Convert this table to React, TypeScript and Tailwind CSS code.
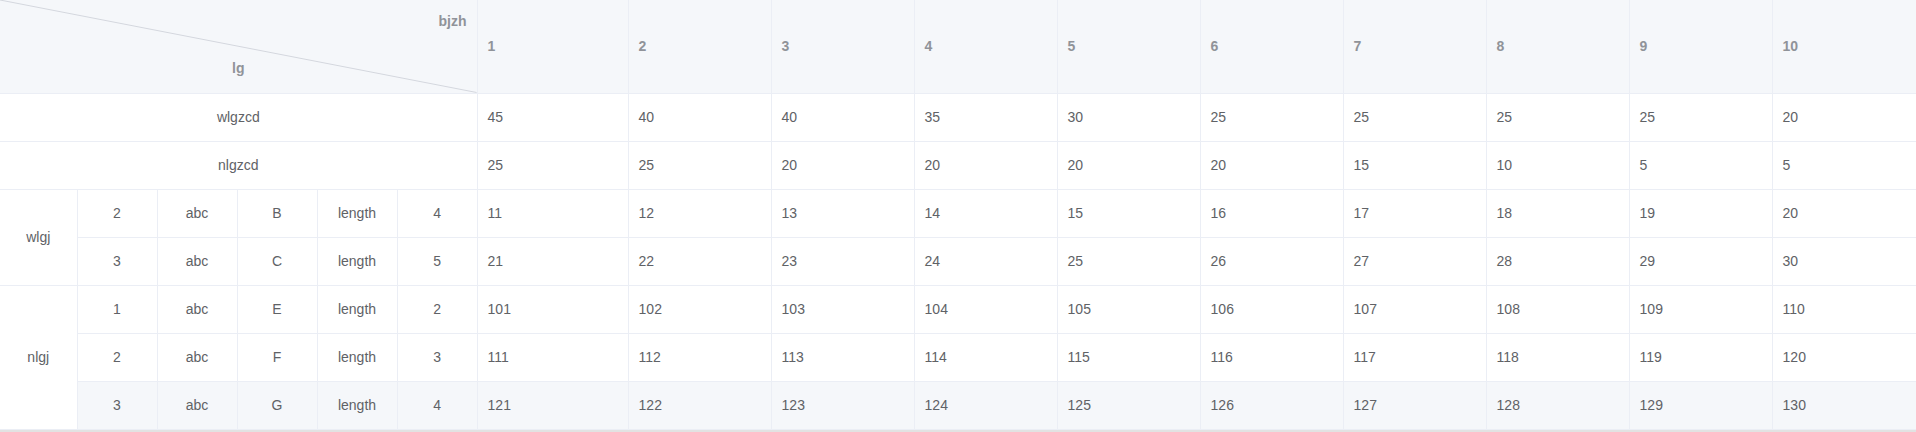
const dataRows: { label?: string; span?: number; left: (string | number)[]; vals: number[] }[] = [
  { left: ['wlgzcd'], vals: [45, 40, 40, 35, 30, 25, 25, 25, 25, 20] },
  { left: ['nlgzcd'], vals: [25, 25, 20, 20, 20, 20, 15, 10, 5, 5] },
  { label: 'wlgj', span: 2, left: [2, 'abc', 'B', 'length', 4], vals: [11, 12, 13, 14, 15, 16, 17, 18, 19, 20] },
  { left: [3, 'abc', 'C', 'length', 5], vals: [21, 22, 23, 24, 25, 26, 27, 28, 29, 30] },
  { label: 'nlgj', span: 3, left: [1, 'abc', 'E', 'length', 2], vals: [101, 102, 103, 104, 105, 106, 107, 108, 109, 110] },
  { left: [2, 'abc', 'F', 'length', 3], vals: [111, 112, 113, 114, 115, 116, 117, 118, 119, 120] },
  { left: [3, 'abc', 'G', 'length', 4], vals: [121, 122, 123, 124, 125, 126, 127, 128, 129, 130] },
];

const colWidths = [77, 80, 80, 80, 80, 80, 151, 143, 143, 143, 143, 143, 143, 143, 143, 144];

export default function App() {
  return (
    <div className="w-[1916px] bg-white" style={{ fontFamily: '"Liberation Sans", Arial, sans-serif' }}>
      <table className="w-[1916px] table-fixed border-collapse text-[14px] leading-[23px] text-[#606266]">
        <colgroup>
          {colWidths.map((w, i) => (
            <col key={i} style={{ width: w }} />
          ))}
        </colgroup>
        <thead>
          <tr className="h-[93px] bg-[#f5f7fa]">
            <th colSpan={6} className="relative border-r border-b border-[#ebeef5] p-0 align-top font-bold text-[#909399]">
              <svg className="absolute inset-0 h-full w-full" preserveAspectRatio="none" viewBox="0 0 100 100">
                <line x1="0" y1="0" x2="100" y2="100" stroke="#d4d7de" strokeWidth="1" vectorEffect="non-scaling-stroke" />
              </svg>
              <div className="relative flex flex-col">
                <div className="pt-[10px] pr-[10px] text-right">bjzh</div>
                <div className="mt-[24px] text-center">lg</div>
              </div>
            </th>
            {Array.from({ length: 10 }, (_, i) => (
              <th key={i} className="border-r border-b border-[#ebeef5] px-[10px] text-left font-bold text-[#909399]">
                {i + 1}
              </th>
            ))}
          </tr>
        </thead>
        <tbody>
          {dataRows.map((row, r) => (
            <tr key={r} className={r === dataRows.length - 1 ? 'h-[48px] bg-[#f5f7fa]' : 'h-[48px]'}>
              {row.label && (
                <td rowSpan={row.span} className="border-r border-b border-[#ebeef5] bg-white text-center">
                  {row.label}
                </td>
              )}
              {row.left.length === 1 ? (
                <td colSpan={6} className="border-r border-b border-[#ebeef5] text-center">
                  {row.left[0]}
                </td>
              ) : (
                row.left.map((c, i) => (
                  <td key={i} className="border-r border-b border-[#ebeef5] text-center">
                    {c}
                  </td>
                ))
              )}
              {row.vals.map((v, i) => (
                <td key={i} className="border-r border-b border-[#ebeef5] px-[10px] text-left">
                  {v}
                </td>
              ))}
            </tr>
          ))}
        </tbody>
      </table>
      <div className="h-[3px] bg-[#e2e2e2]" />
    </div>
  );
}
